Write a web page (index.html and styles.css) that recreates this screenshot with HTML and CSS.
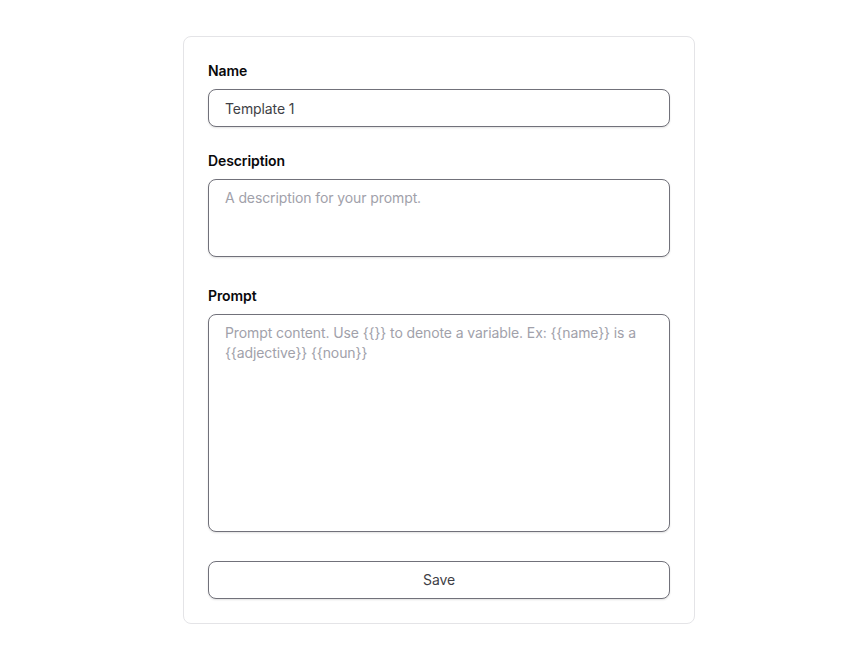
FILE: index.html
```html
<!DOCTYPE html>
<html lang="en">
<head>
<meta charset="utf-8">
<title>Template</title>
<link rel="stylesheet" href="styles.css">
</head>
<body>
<main class="page">
  <form class="card">
    <div class="field">
      <label class="label" for="name">Name</label>
      <input class="input" id="name" type="text" value="Template 1">
    </div>
    <div class="field field-area">
      <label class="label" for="desc">Description</label>
      <textarea class="input area" id="desc" rows="3" placeholder="A description for your prompt."></textarea>
    </div>
    <div class="field field-area">
      <label class="label" for="prompt">Prompt</label>
      <textarea class="input area" id="prompt" rows="10" placeholder="Prompt content. Use {{}} to denote a variable. Ex: {{name}} is a {{adjective}} {{noun}}"></textarea>
    </div>
    <button class="btn" type="button">Save</button>
  </form>
</main>
</body>
</html>
```

FILE: styles.css
```css
* { box-sizing: border-box; }
html, body { margin: 0; padding: 0; background: #ffffff; }
body {
  font-family: Inter, "Liberation Sans", sans-serif;
  color: #18181b;
}
.page {
  display: flex;
  justify-content: center;
  padding-top: 36px;
  padding-left: 20px;
}
.card {
  width: 512px;
  border: 1px solid #e4e4e7;
  border-radius: 8px;
  background: #ffffff;
  padding: 24px;
  display: flex;
  flex-direction: column;
}
.field {
  display: flex;
  flex-direction: column;
  gap: 8px;
  margin-bottom: 24px;
}
.field-area { margin-bottom: 29px; }
.label {
  font-size: 14px;
  line-height: 20px;
  font-weight: 600;
  color: #09090b;
  letter-spacing: -0.1px;
}
.input {
  display: block;
  width: 100%;
  height: 38px;
  border: 1px solid #71717a;
  border-radius: 8px;
  padding: 8px 16px;
  font-family: inherit;
  font-size: 14px;
  line-height: 20px;
  letter-spacing: -0.1px;
  color: #3f3f46;
  background: #ffffff;
  box-shadow: 0 1px 2px rgba(0,0,0,0.12);
  outline: none;
}
.input::placeholder { color: #a1a1aa; }
.area {
  height: auto;
  resize: none;
}
#desc { height: 78px; }
#prompt { height: 218px; }
.btn {
  width: 100%;
  height: 38px;
  border: 1px solid #71717a;
  border-radius: 8px;
  background: #ffffff;
  font-family: inherit;
  font-size: 14px;
  line-height: 20px;
  letter-spacing: -0.1px;
  color: #3f3f46;
  box-shadow: 0 1px 2px rgba(0,0,0,0.12);
  cursor: pointer;
}
```
